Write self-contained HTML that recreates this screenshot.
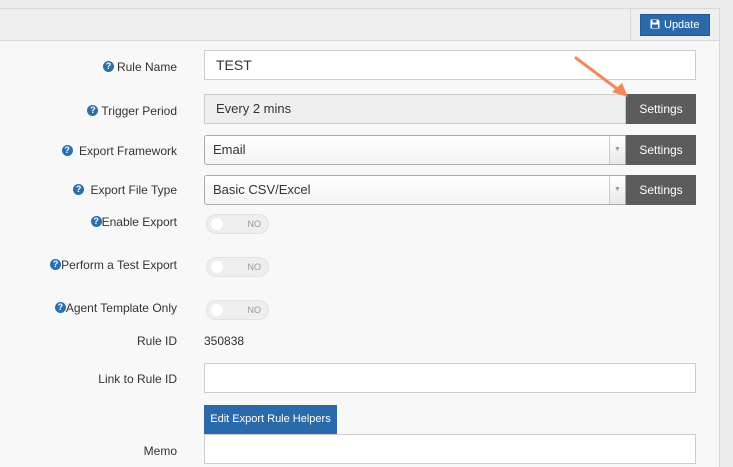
<!DOCTYPE html>
<html style="overflow:hidden;height:467px"><head><style>
*{box-sizing:border-box;margin:0;padding:0}
body{width:733px;height:467px;background:#ebebeb;font-family:"Liberation Sans",sans-serif;font-size:12px;color:#333;position:relative;overflow:hidden}
.abs{position:absolute}
.hdr{left:-1px;top:8px;width:721px;height:33px;background:#eeeeee;border:1px solid #d8d8d8}
.body{left:-1px;top:40px;width:721px;height:430px;background:#f8f8f8;border:1px solid #d8d8d8}
.lbl{position:absolute;right:556px;text-align:right;white-space:nowrap;font-size:12px;line-height:14px;color:#333}
.q{display:inline-block;width:11px;height:11px;border-radius:50%;background:#2a6fb0;color:#fff;font-size:9px;font-weight:bold;text-align:center;line-height:11px;vertical-align:top;margin-top:1px;margin-right:3px}
.inp{position:absolute;left:204px;width:492px;height:30px;background:#fff;border:1px solid #ccc;padding-left:11px;font-size:14px;line-height:28px;color:#333}
.set{position:absolute;left:626px;width:70px;height:30px;background:#5c5c5c;color:#fff;font-size:12px;text-align:center;line-height:30px}
.sel{position:absolute;left:204px;width:422px;height:30px;background:linear-gradient(#fff,#f4f4f4);border:1px solid #aaa;border-radius:3px 0 0 3px;padding-left:8px;font-size:13px;line-height:28px;color:#333}
.sel .ar{position:absolute;right:0;top:0;width:16px;height:28px;border-left:1px solid #ccc;background:linear-gradient(#fff,#e8e8e8);color:#999;font-size:7px;text-align:center;line-height:28px}
.tg{position:absolute;left:206px;width:63px;height:20px;border-radius:10px;background:#eee;border:1px solid #e2e2e2}
.tg .k{position:absolute;left:4px;top:3px;width:12px;height:12px;border-radius:50%;background:#fff}
.tg .t{position:absolute;right:7px;top:4px;font-size:9px;color:#999}
</style></head><body>
<div class="abs hdr"></div>
<div class="abs" style="left:630px;top:9px;width:1px;height:31px;background:#d8d8d8"></div>
<div class="abs" style="left:640px;top:14px;width:70px;height:22px;background:#2a6aab;border:1px solid #1f5a94;color:#fff;font-size:11px;line-height:20px;padding-left:9px">
<svg width="10" height="10" viewBox="0 0 10 10" style="vertical-align:-1px;margin-right:4px"><path d="M0.5 0.5h7.5l1.5 1.5v7.5h-9z" fill="#fff"/><rect x="2.5" y="1" width="4" height="2.5" fill="#2a6aab"/><rect x="2" y="5.5" width="6" height="3.5" fill="#2a6aab"/></svg>Update</div>
<div class="abs body"></div>

<div class="lbl" style="top:60px"><span class="q">?</span>Rule Name</div>
<div class="inp" style="top:50px">TEST</div>

<div class="lbl" style="top:104px"><span class="q">?</span>Trigger Period</div>
<div class="inp" style="top:94px;background:#eee;width:422px;font-size:13px">Every 2 mins</div>
<div class="set" style="top:94px">Settings</div>

<div class="lbl" style="top:144px"><span class="q">?</span> Export Framework</div>
<div class="sel" style="top:135px">Email<div class="ar">▼</div></div>
<div class="set" style="top:135px">Settings</div>

<div class="lbl" style="top:183px"><span class="q">?</span> Export File Type</div>
<div class="sel" style="top:175px">Basic CSV/Excel<div class="ar">▼</div></div>
<div class="set" style="top:175px">Settings</div>

<div class="lbl" style="top:215px"><span class="q" style="margin-right:0">?</span>Enable Export</div>
<div class="tg" style="top:214px"><div class="k"></div><div class="t">NO</div></div>

<div class="lbl" style="top:258px"><span class="q" style="margin-right:0">?</span>Perform a Test Export</div>
<div class="tg" style="top:257px"><div class="k"></div><div class="t">NO</div></div>

<div class="lbl" style="top:301px"><span class="q" style="margin-right:0">?</span>Agent Template Only</div>
<div class="tg" style="top:300px"><div class="k"></div><div class="t">NO</div></div>

<div class="lbl" style="top:334px">Rule ID</div>
<div class="abs" style="left:204px;top:334px;font-size:12px">350838</div>

<div class="lbl" style="top:372px">Link to Rule ID</div>
<div class="inp" style="top:363px"></div>

<div class="abs" style="left:204px;top:405px;width:133px;height:29px;background:#2a6aab;color:#fff;font-size:11px;text-align:center;line-height:29px">Edit Export Rule Helpers</div>
<div class="lbl" style="top:444px">Memo</div>
<div class="inp" style="top:434px"></div>

<svg class="abs" style="left:570px;top:55px" width="65" height="45" viewBox="0 0 65 45"><line x1="6" y1="3" x2="50" y2="36" stroke="#f08a5d" stroke-width="3" stroke-linecap="round"/><path d="M58 42 L42 37 L52 28 Z" fill="#f08a5d"/></svg>
</body></html>
